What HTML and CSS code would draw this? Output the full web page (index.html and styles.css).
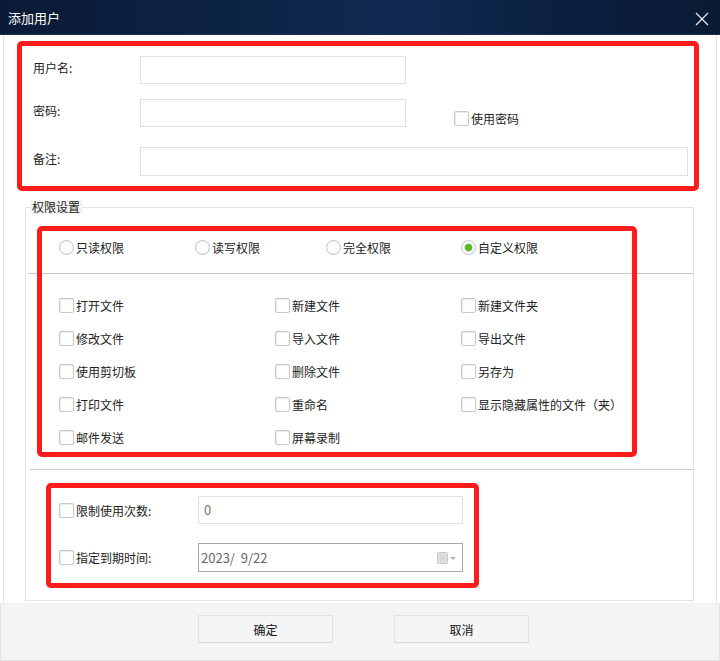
FILE: index.html
```html
<!DOCTYPE html>
<html lang="zh-CN">
<head>
<meta charset="utf-8">
<title>添加用户</title>
<link rel="stylesheet" href="styles.css">
</head>
<body>
<div class="titlebar">
  <span class="title">添加用户</span>
  <svg class="close" width="14" height="14" viewBox="0 0 14 14"><path d="M1 1L13 13M13 1L1 13" stroke="#e6e9ee" stroke-width="1.3" fill="none"/></svg>
</div>
<div class="main">
  <div class="redbox box-user">
    <div class="frow r1">
      <span class="flabel">用户名:</span>
      <span class="input w-short"></span>
    </div>
    <div class="frow r2">
      <span class="flabel">密码:</span>
      <span class="input w-short"></span>
      <span class="check use-pwd"><span class="cb"></span>使用密码</span>
    </div>
    <div class="frow r3">
      <span class="flabel">备注:</span>
      <span class="input w-long"></span>
    </div>
  </div>

  <div class="group">
    <div class="group-title">权限设置</div>
    <div class="perm">
      <div class="radios">
        <span class="check"><span class="rb"></span>只读权限</span>
        <span class="check"><span class="rb"></span>读写权限</span>
        <span class="check"><span class="rb"></span>完全权限</span>
        <span class="check"><span class="rb on"></span>自定义权限</span>
      </div>
      <div class="sep sep1"></div>
      <div class="perm-grid">
        <span class="check"><span class="cb"></span>打开文件</span>
        <span class="check"><span class="cb"></span>新建文件</span>
        <span class="check"><span class="cb"></span>新建文件夹</span>
        <span class="check"><span class="cb"></span>修改文件</span>
        <span class="check"><span class="cb"></span>导入文件</span>
        <span class="check"><span class="cb"></span>导出文件</span>
        <span class="check"><span class="cb"></span>使用剪切板</span>
        <span class="check"><span class="cb"></span>删除文件</span>
        <span class="check"><span class="cb"></span>另存为</span>
        <span class="check"><span class="cb"></span>打印文件</span>
        <span class="check"><span class="cb"></span>重命名</span>
        <span class="check"><span class="cb"></span>显示隐藏属性的文件（夹）</span>
        <span class="check"><span class="cb"></span>邮件发送</span>
        <span class="check"><span class="cb"></span>屏幕录制</span>
      </div>
      <div class="redbox overlay"></div>
    </div>
    <div class="sep sep2"></div>
    <div class="redbox box-limit">
      <div class="lrow lr1">
        <span class="check lcheck"><span class="cb"></span>限制使用次数:</span>
        <span class="input w-mid num">0</span>
      </div>
      <div class="lrow lr2">
        <span class="check lcheck"><span class="cb"></span>指定到期时间:</span>
        <span class="input w-mid date"><span class="date-text">2023/  9/22</span>
          <svg class="cal" width="20" height="12" viewBox="0 0 20 12">
            <rect x="0.5" y="0.5" width="10" height="11" rx="1" fill="#e4e4e4" stroke="#c9c9c9"/>
            <path d="M1 4H10M1 7H10M4 1V11M7 1V11" stroke="#d2d2d2" stroke-width="0.8"/>
            <path d="M13 5H19L16 8Z" fill="#b4b4b4"/>
          </svg>
        </span>
      </div>
    </div>
  </div>
</div>
<div class="footer">
  <span class="btn">确定</span>
  <span class="btn">取消</span>
</div>
</body>
</html>
```
FILE: styles.css
```css
* { box-sizing: border-box; }
html, body { margin: 0; padding: 0; }
body {
  width: 720px;
  height: 661px;
  overflow: hidden;
  background: #fff;
  font-family: "Noto Sans CJK SC", "Microsoft YaHei", sans-serif;
  font-size: 12px;
  color: #222;
}
.titlebar {
  height: 35px;
  display: flex;
  align-items: center;
  justify-content: space-between;
  padding: 0 11px 0 8px;
  background: linear-gradient(90deg, #0a1a36 0%, #0d2446 35%, #0f2a52 55%, #0b1f3f 80%, #0a1a33 100%);
  border-bottom: 1px solid #1e3150;
}
.title { color: #fff; font-size: 13px; line-height: 16px; margin-top: 2px; }
.close { display: block; margin-top: 3px; }

.main {
  height: 568px;
  margin: 0 3px;
  border-left: 1px solid #e6e6e6;
  border-right: 1px solid #e6e6e6;
  padding-top: 6px;
}
.redbox {
  border: 5px solid #fe1b1b;
  border-radius: 5px;
}
.box-user {
  margin-left: 13px;
  width: 682px;
  height: 150px;
  padding: 10px 0 0 11px;
}
.frow { display: flex; align-items: flex-start; }
.r2 { margin-top: 15px; }
.r3 { margin-top: 20px; }
.flabel { width: 107px; line-height: 24px; }
.input {
  display: block;
  height: 28px;
  border: 1px solid #e0e0e0;
  background: #fff;
}
.w-short { width: 266px; }
.w-long { width: 548px; height: 29px; }
.w-mid { width: 265px; }

.check {
  display: flex;
  align-items: center;
  gap: 2px;
  line-height: 15px;
  white-space: nowrap;
}
.cb {
  display: block;
  width: 15px;
  height: 15px;
  flex: none;
  border: 1px solid #c8c8c8;
  border-radius: 2px;
  background: #fff;
  box-shadow: inset 1px 1px 0 #ececec;
}
.rb {
  display: block;
  width: 15px;
  height: 15px;
  flex: none;
  border: 1px solid #c2c2c2;
  border-radius: 50%;
  background: radial-gradient(circle, #fff 0, #fff 50%, #ececec 100%);
  margin-right: 1px;
}
.rb.on {
  background: radial-gradient(circle, #62bd2c 0, #56b323 3.3px, #fff 4.3px, #fff 5px, #ececec 100%);
}
.use-pwd { margin: 12px 0 0 48px; }

.group {
  margin: 16px 0 0 21px;
  width: 669px;
  border: 1px solid #e3e3e3;
  padding-bottom: 12px;
}
.group-title {
  width: fit-content;
  margin: -8px 0 0 4px;
  padding: 0 2px 0 2px;
  line-height: 14px;
  background: #f2f2f2;
  color: #222;
}
.perm { position: relative; }
.radios {
  height: 59px;
  padding: 26px 0 0 33px;
  display: grid;
  grid-template-columns: 136px 131px 135px 1fr;
  align-items: start;
}
.radios .check { gap: 1px; }
.sep { height: 1px; background: #c9c9c9; }
.sep1 { margin-left: 2px; }
.sep2 { margin: 15px 0 0 4px; }
.perm-grid {
  padding: 15px 0 0 33px;
  display: grid;
  grid-template-columns: 216px 186px 1fr;
  grid-auto-rows: 33px;
  align-items: center;
}
.overlay {
  position: absolute;
  left: 11px;
  top: 12px;
  width: 600px;
  height: 231px;
  pointer-events: none;
}
.box-limit {
  margin: 13px 0 0 20px;
  width: 433px;
  height: 105px;
  padding: 8px 0 0 8px;
}
.lrow { display: flex; align-items: center; }
.lr2 { margin-top: 19px; }
.lr2 .input { height: 29px; }
.lcheck { width: 139px; }
.num {
  padding-left: 5px;
  line-height: 26px;
  color: #777;
  font-size: 13px;
}
.date {
  border-color: #a8a8a8;
  display: flex;
  align-items: center;
  justify-content: space-between;
  padding: 0 5px 0 2px;
}
.date-text { white-space: pre; color: #666; font-size: 13px; line-height: 16px; }
.cal { display: block; margin-top: 1px; }

.footer {
  height: 58px;
  background: #f4f4f4;
  border: 1px solid #e3e3e3;
  border-top: none;
  display: flex;
  gap: 61px;
  padding: 12px 0 0 197px;
}
.btn {
  display: flex;
  align-items: center;
  justify-content: center;
  width: 135px;
  height: 28px;
  background: #f5f5f5;
  border: 1px solid #e2e2e2;
  border-bottom-color: #d8d8d8;
  color: #111;
  font-size: 12px;
}
```
